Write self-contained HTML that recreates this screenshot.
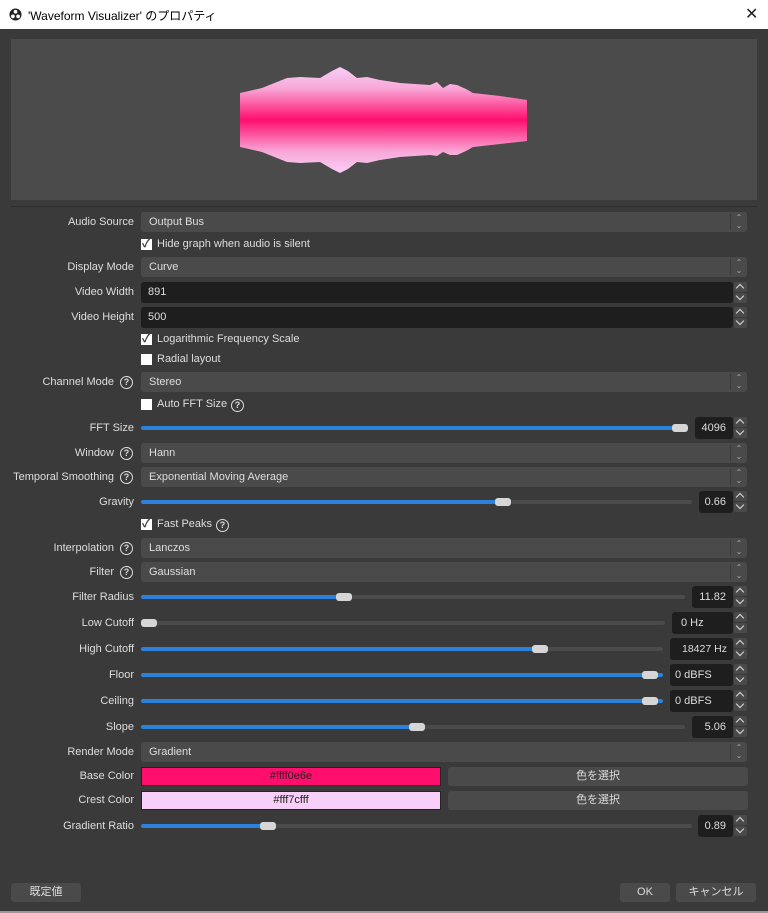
<!DOCTYPE html>
<html><head><meta charset="utf-8"><style>
*{box-sizing:border-box;margin:0;padding:0}
body{width:768px;height:913px;background:#3a3a3a;position:relative;overflow:hidden;font-family:"Liberation Sans","Noto Sans CJK JP",sans-serif;font-size:11px;color:#dedede}
.a{position:absolute}
.title{left:0;top:0;width:768px;height:29px;background:#fff;color:#000;font-size:12px}
.lbl{position:absolute;right:634px;height:16px;line-height:16px;text-align:right;white-space:nowrap}
.lq{right:654px}
.q{position:absolute;left:120px;width:13px;height:13px;border:1.5px solid #ddd;border-radius:50%;font-size:9px;font-weight:bold;text-align:center;line-height:10px;color:#ddd}
.cb{position:absolute;left:141px;width:606px;height:20px;background:#4a4a4a;border-radius:3px;padding-left:8px;line-height:20px}
.cb:after{content:"";position:absolute;right:16px;top:2px;bottom:2px;width:1px;background:#3a3a3a}
.cb i{position:absolute;right:4px;top:2px;font-style:normal;font-size:8px;line-height:8px;color:#aaa;text-align:center;width:8px}
.tf{position:absolute;left:141px;width:592px;height:21px;background:#1e1e1e;border-radius:3px;padding-left:7px;line-height:21px}
.ar{position:absolute;left:734px;width:13px;height:21px}
.ar div{height:10px;background:#4a4a4a;border-radius:2px;margin-bottom:1px;position:relative}
.ar div:after{content:"";position:absolute;left:3px;width:5px;height:5px;border-left:1.5px solid #ddd;border-top:1.5px solid #ddd}
.ar div.u:after{top:3px;transform:rotate(45deg)}
.ar div.d:after{top:0px;transform:rotate(225deg)}
.chk{position:absolute;left:141px;height:14px;line-height:13px;padding-left:16px;white-space:nowrap}
.chk:before{content:"";position:absolute;left:0;top:1px;width:11px;height:11px;background:#fff}
.chk.on:after{content:"✓";position:absolute;left:1px;top:0;color:#333;font-size:11px;font-weight:bold}
.tr{position:absolute;left:141px;height:4px;border-radius:2px;background:#4b4b4b;overflow:hidden}
.tr b{position:absolute;left:0;top:0;bottom:0;background:#2a82da}
.h{position:absolute;width:16px;height:8px;background:#d6d6d6;border-radius:3px}
.sp{position:absolute;height:22px;background:#1e1e1e;border-radius:3px;text-align:right;padding-right:7px;line-height:22px;white-space:nowrap;overflow:hidden}
.btn{position:absolute;height:19px;background:#4a4a4a;border-radius:3px;text-align:center;line-height:19px}
.sw{position:absolute;left:141px;width:300px;height:19px;border:1px solid #222;text-align:center;line-height:17px;color:#222}
</style></head><body>
<div class="a title">
<svg class="a" style="left:9px;top:8px" width="13" height="13" viewBox="0 0 14 14"><circle cx="7" cy="7" r="6.5" fill="#222"/><circle cx="7" cy="4" r="2" fill="#fff"/><circle cx="4.2" cy="9" r="2" fill="#fff"/><circle cx="9.8" cy="9" r="2" fill="#fff"/></svg>
<div class="a" style="left:28px;top:7px">'Waveform Visualizer' のプロパティ</div>
<div class="a" style="left:745px;top:4px;font-size:16px;color:#222">✕</div>
</div>
<div class="a" style="left:11px;top:39px;width:746px;height:161px;background:#4b4b4b"></div>
<svg class="a" style="left:0;top:0" width="768" height="200">
<defs><linearGradient id="g" x1="0" y1="67" x2="0" y2="173" gradientUnits="userSpaceOnUse"><stop offset="0" stop-color="#f7cff8"/><stop offset="0.2" stop-color="#f9a8d8"/><stop offset="0.5" stop-color="#ff0e6e"/><stop offset="0.8" stop-color="#f9a8d8"/><stop offset="1" stop-color="#f7cff8"/></linearGradient></defs>
<path fill="url(#g)" d="M240 93 L262 88 L287 78 L300 77 L320 78 L332 71 L340 67 L348 71 L357 78 L367 77 L380 80 L400 83 L415 84 L430 85 L437 82 L443 88 L450 84 L457 85 L466 89 L473 93 L500 96 L527 100 L527 141 L500 144 L473 147 L466 151 L457 155 L450 155 L443 152 L437 156 L430 155 L415 156 L400 157 L380 160 L367 163 L357 162 L348 169 L340 173 L332 169 L320 162 L300 163 L287 162 L262 152 L240 147 Z"/>
</svg>
<div class="a" style="left:11px;top:206px;width:746px;height:1px;background:#2e2e2e"></div>

<div class="lbl" style="top:214px">Audio Source</div><div class="cb" style="top:212px">Output Bus<i>⌃<br>⌄</i></div>
<div class="chk on" style="top:238px">Hide graph when audio is silent</div>
<div class="lbl" style="top:259px">Display Mode</div><div class="cb" style="top:257px">Curve<i>⌃<br>⌄</i></div>
<div class="lbl" style="top:284px">Video Width</div><div class="tf" style="top:282px">891</div><div class="ar" style="top:282px"><div class="u"></div><div class="d"></div></div>
<div class="lbl" style="top:309px">Video Height</div><div class="tf" style="top:307px">500</div><div class="ar" style="top:307px"><div class="u"></div><div class="d"></div></div>
<div class="chk on" style="top:333px">Logarithmic Frequency Scale</div>
<div class="chk" style="top:353px">Radial layout</div>
<div class="lbl lq" style="top:374px">Channel Mode</div><div class="q" style="top:376px">?</div><div class="cb" style="top:372px">Stereo<i>⌃<br>⌄</i></div>
<div class="chk" style="top:398px">Auto FFT Size</div><div class="q" style="left:231px;top:399px">?</div>
<div class="lbl" style="top:420px">FFT Size</div><div class="tr" style="top:426px;width:538px"><b style="width:100%"></b></div><div class="h" style="left:672px;top:424px"></div><div class="sp" style="top:417px;left:695px;width:38px">4096</div><div class="ar" style="top:417px"><div class="u"></div><div class="d"></div></div>
<div class="lbl lq" style="top:445px">Window</div><div class="q" style="top:447px">?</div><div class="cb" style="top:443px">Hann<i>⌃<br>⌄</i></div>
<div class="lbl lq" style="top:469px">Temporal Smoothing</div><div class="q" style="top:471px">?</div><div class="cb" style="top:467px">Exponential Moving Average<i>⌃<br>⌄</i></div>
<div class="lbl" style="top:494px">Gravity</div><div class="tr" style="top:500px;width:551px"><b style="width:362px"></b></div><div class="h" style="left:495px;top:498px"></div><div class="sp" style="top:491px;left:699px;width:34px">0.66</div><div class="ar" style="top:491px"><div class="u"></div><div class="d"></div></div>
<div class="chk on" style="top:518px">Fast Peaks</div><div class="q" style="left:216px;top:519px">?</div>
<div class="lbl lq" style="top:540px">Interpolation</div><div class="q" style="top:542px">?</div><div class="cb" style="top:538px">Lanczos<i>⌃<br>⌄</i></div>
<div class="lbl lq" style="top:564px">Filter</div><div class="q" style="top:566px">?</div><div class="cb" style="top:562px">Gaussian<i>⌃<br>⌄</i></div>
<div class="lbl" style="top:589px">Filter Radius</div><div class="tr" style="top:595px;width:544px"><b style="width:203px"></b></div><div class="h" style="left:336px;top:593px"></div><div class="sp" style="top:586px;left:692px;width:41px">11.82</div><div class="ar" style="top:586px"><div class="u"></div><div class="d"></div></div>
<div class="lbl" style="top:615px">Low Cutoff</div><div class="tr" style="top:621px;width:524px"><b style="width:0"></b></div><div class="h" style="left:141px;top:619px"></div><div class="sp" style="top:612px;left:672px;width:61px;text-align:left;padding-left:9px">0 Hz</div><div class="ar" style="top:612px"><div class="u"></div><div class="d"></div></div>
<div class="lbl" style="top:641px">High Cutoff</div><div class="tr" style="top:647px;width:522px"><b style="width:399px"></b></div><div class="h" style="left:532px;top:645px"></div><div class="sp" style="top:638px;left:670px;width:63px;text-align:left;padding:0 0 0 12px;font-size:10.5px">18427 Hz</div><div class="ar" style="top:638px"><div class="u"></div><div class="d"></div></div>
<div class="lbl" style="top:667px">Floor</div><div class="tr" style="top:673px;width:522px"><b style="width:100%"></b></div><div class="h" style="left:642px;top:671px"></div><div class="sp" style="top:664px;left:670px;width:63px;text-align:left;padding-left:5px">0 dBFS</div><div class="ar" style="top:664px"><div class="u"></div><div class="d"></div></div>
<div class="lbl" style="top:693px">Ceiling</div><div class="tr" style="top:699px;width:522px"><b style="width:100%"></b></div><div class="h" style="left:642px;top:697px"></div><div class="sp" style="top:690px;left:670px;width:63px;text-align:left;padding-left:5px">0 dBFS</div><div class="ar" style="top:690px"><div class="u"></div><div class="d"></div></div>
<div class="lbl" style="top:719px">Slope</div><div class="tr" style="top:725px;width:544px"><b style="width:276px"></b></div><div class="h" style="left:409px;top:723px"></div><div class="sp" style="top:716px;left:692px;width:41px">5.06</div><div class="ar" style="top:716px"><div class="u"></div><div class="d"></div></div>
<div class="lbl" style="top:744px">Render Mode</div><div class="cb" style="top:742px">Gradient<i>⌃<br>⌄</i></div>
<div class="lbl" style="top:768px">Base Color</div><div class="sw" style="top:767px;background:#ff0e6e">#ffff0e6e</div><div class="btn" style="left:448px;width:300px;top:767px">色を選択</div>
<div class="lbl" style="top:792px">Crest Color</div><div class="sw" style="top:791px;background:#f7cff8">#fff7cfff</div><div class="btn" style="left:448px;width:300px;top:791px">色を選択</div>
<div class="lbl" style="top:818px">Gradient Ratio</div><div class="tr" style="top:824px;width:551px"><b style="width:127px"></b></div><div class="h" style="left:260px;top:822px"></div><div class="sp" style="top:815px;left:698px;width:35px">0.89</div><div class="ar" style="top:815px"><div class="u"></div><div class="d"></div></div>

<div class="btn" style="left:11px;top:883px;width:70px">既定値</div>
<div class="btn" style="left:620px;top:883px;width:50px">OK</div>
<div class="btn" style="left:676px;top:883px;width:80px">キャンセル</div>
<div class="a" style="left:0;top:911px;width:768px;height:2px;background:#9a9a9a"></div>
</body></html>
